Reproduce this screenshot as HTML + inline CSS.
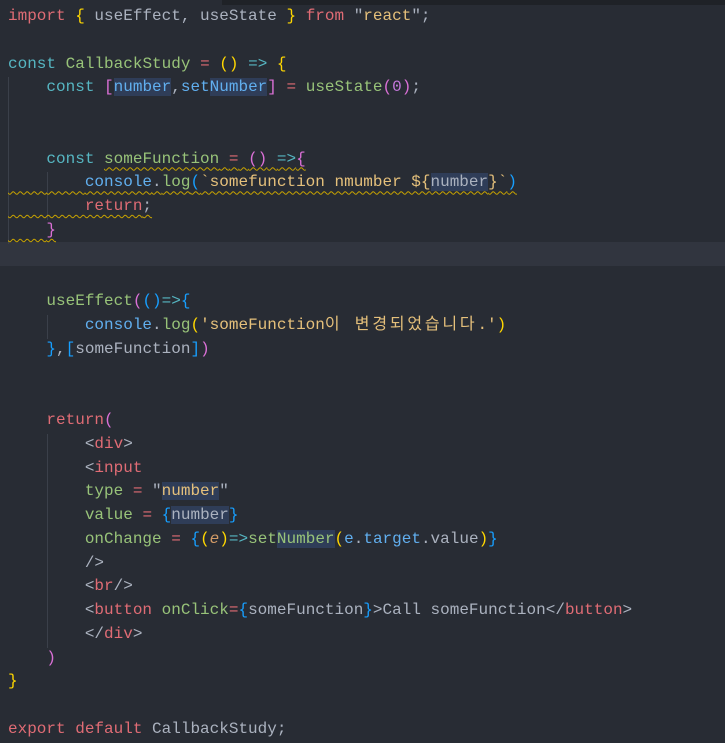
<!DOCTYPE html>
<html><head><meta charset="utf-8"><style>
html,body{margin:0;padding:0;background:#282c34;width:725px;height:743px;overflow:hidden}
.ed{position:absolute;left:8px;top:5px;font-family:"Liberation Mono","Noto Sans CJK KR",monospace;font-size:16px;line-height:23.77px;color:#abb2bf;white-space:pre}
.hl{position:absolute;left:0;top:242px;width:725px;height:24px;background:#31353f}
.g{position:absolute;width:1px;background:#3b404a}
.k{color:#e06c75}.c{color:#56b6c2}.f{color:#98c379}.s{color:#e5c07b}.y{color:#ffd700}.p{color:#da70d6}.b{color:#179fff}
.v{color:#61afef}.n{color:#c678dd}.o{color:#d19a66;font-style:italic}.e{color:#e06c75}
.sel{background:#2f3d58}
.ko{letter-spacing:2.8px}
.w{text-decoration:underline wavy #c9a400;text-decoration-thickness:1px;text-underline-offset:4px}
.top{position:absolute;left:222px;top:0;width:503px;height:5px;background:#1f2227}
</style></head><body>
<div class="top"></div>
<div class="hl"></div>
<div class="g" style="left:8px;top:77px;height:167px"></div>
<div class="g" style="left:47px;top:172px;height:48px"></div>
<div class="g" style="left:47px;top:315px;height:24px"></div>
<div class="g" style="left:47px;top:434px;height:214px"></div>
<div class="ed"><span class="k">import</span> <span class="y">{</span> useEffect, useState <span class="y">}</span> <span class="k">from</span> "<span class="s">react</span>";

<span class="c">const</span> <span class="f">CallbackStudy</span> <span class="e">=</span> <span class="y">()</span> <span class="c">=&gt;</span> <span class="y">{</span>
    <span class="c">const</span> <span class="p">[</span><span class="v sel">number</span>,<span class="v">set</span><span class="v sel">Number</span><span class="p">]</span> <span class="e">=</span> <span class="f">useState</span><span class="p">(</span><span class="n">0</span><span class="p">)</span>;


    <span class="c">const</span> <span class="f w">someFunction</span><span class="w"> <span class="e">=</span> <span class="p">()</span> <span class="c">=&gt;</span><span class="p">{</span></span>
<span class="w">    </span><span class="w">    <span class="v">console</span>.<span class="f">log</span><span class="b">(</span><span class="s">`somefunction nmumber ${</span><span class="sel">number</span><span class="s">}`</span><span class="b">)</span></span>
<span class="w">        <span class="k">return</span>;</span>
<span class="w">    <span class="p">}</span></span>


    <span class="f">useEffect</span><span class="p">(</span><span class="b">()</span><span class="c">=&gt;</span><span class="b">{</span>
        <span class="v">console</span>.<span class="f">log</span><span class="y">(</span><span class="s">'someFunction<span class="ko">이 변경되었습니다</span>.'</span><span class="y">)</span>
    <span class="b">}</span>,<span class="b">[</span>someFunction<span class="b">]</span><span class="p">)</span>


    <span class="k">return</span><span class="p">(</span>
        &lt;<span class="k">div</span>&gt;
        &lt;<span class="k">input</span>
        <span class="f">type</span> <span class="e">=</span> "<span class="s sel">number</span>"
        <span class="f">value</span> <span class="e">=</span> <span class="b">{</span><span class="sel">number</span><span class="b">}</span>
        <span class="f">onChange</span> <span class="e">=</span> <span class="b">{</span><span class="y">(</span><span class="o">e</span><span class="y">)</span><span class="c">=&gt;</span><span class="f">set</span><span class="f sel">Number</span><span class="y">(</span><span class="v">e</span>.<span class="v">target</span>.value<span class="y">)</span><span class="b">}</span>
        /&gt;
        &lt;<span class="k">br</span>/&gt;
        &lt;<span class="k">button</span> <span class="f">onClick</span><span class="e">=</span><span class="b">{</span>someFunction<span class="b">}</span>&gt;Call someFunction&lt;/<span class="k">button</span>&gt;
        &lt;/<span class="k">div</span>&gt;
    <span class="p">)</span>
<span class="y">}</span>

<span class="k">export</span> <span class="k">default</span> CallbackStudy;</div>
</body></html>
